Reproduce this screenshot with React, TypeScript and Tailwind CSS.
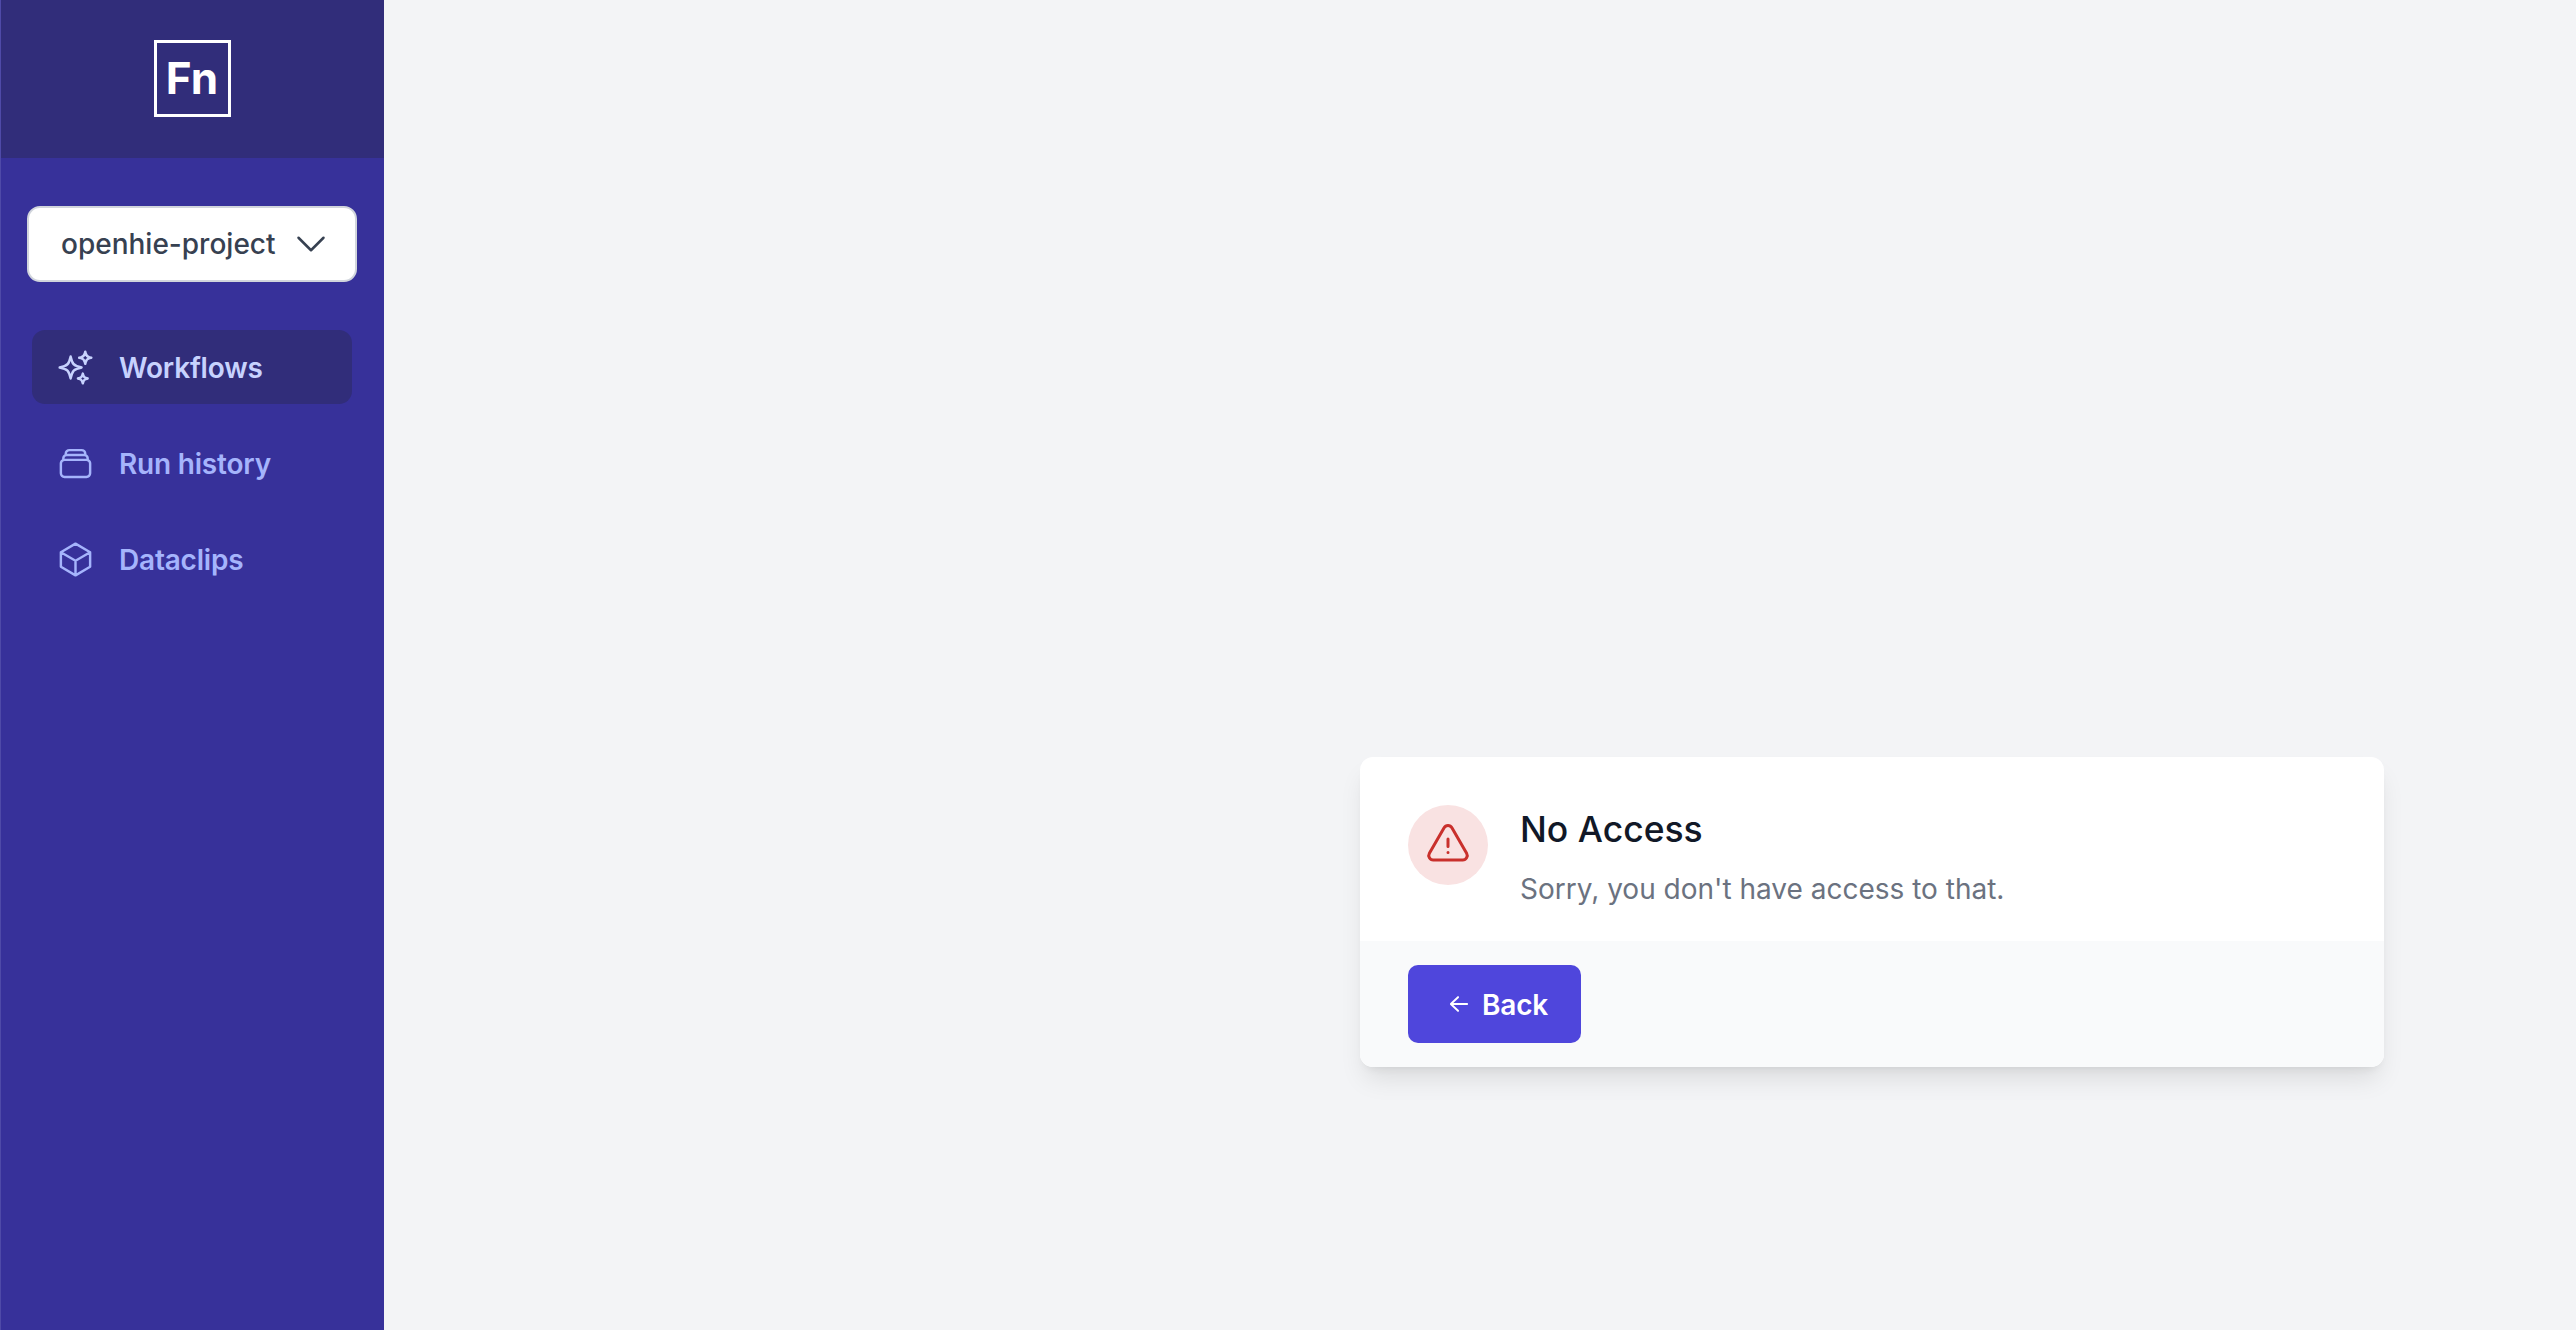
import {
  HiOutlineSparkles,
  HiOutlineRectangleStack,
  HiOutlineCube,
  HiOutlineChevronDown,
  HiOutlineExclamationTriangle,
  HiMiniArrowLeft,
} from "react-icons/hi2";

const font = { fontFamily: "Inter, sans-serif" };

export default function App() {
  return (
    <div className="flex h-[1330px] w-[2576px] overflow-hidden bg-[#f3f4f6]" style={font}>
      {/* Sidebar */}
      <aside className="flex w-[384px] shrink-0 flex-col border-l border-l-[#4f4aa8] bg-[#37319a]">
        <div className="flex h-[158px] items-center justify-center bg-[#312d7a] pr-[1px]">
          <div className="mb-[2px] flex h-[77px] w-[77px] items-center justify-center border-[3px] border-white text-[44px] font-bold text-white">
            Fn
          </div>
        </div>

        <div className="px-[26px] pt-[48px]">
          <button className="flex h-[76px] w-[330px] items-center justify-between rounded-[13px] border-2 border-gray-300 bg-white pl-[32px] pr-[24px] text-[28px] font-medium text-[#374151]">
            openhie-project
            <HiOutlineChevronDown className="h-[40px] w-[40px]" />
          </button>
        </div>

        <nav className="flex flex-col gap-[22px] pl-[31px] pr-[32px] pt-[48px]">
          <a className="flex h-[74px] items-center gap-[24px] rounded-[13px] bg-[#312d7a] px-[24px] text-[28px] font-semibold tracking-[-0.2px] text-[#c7d2fe]">
            <HiOutlineSparkles className="h-[39px] w-[39px]" />
            <span className="mt-[2px]">Workflows</span>
          </a>
          <a className="flex h-[74px] items-center gap-[24px] px-[24px] text-[28px] font-semibold tracking-[-0.2px] text-[#a5b4fc]">
            <HiOutlineRectangleStack className="h-[39px] w-[39px]" />
            <span className="mt-[2px]">Run history</span>
          </a>
          <a className="flex h-[74px] items-center gap-[24px] px-[24px] text-[28px] font-semibold tracking-[-0.2px] text-[#a5b4fc]">
            <HiOutlineCube className="h-[39px] w-[39px]" />
            <span className="mt-[2px]">Dataclips</span>
          </a>
        </nav>
      </aside>

      {/* Main */}
      <main className="flex flex-1 items-start justify-end pr-[192px] pt-[757px]">
        <div className="w-[1024px] overflow-hidden rounded-[13px] bg-white shadow-[0_16px_26px_-5px_rgba(0,0,0,0.1),0_6px_10px_-6px_rgba(0,0,0,0.1)]">
          <div className="flex h-[184px] gap-[32px] px-[48px] pt-[48px]">
            <div className="flex h-[80px] w-[80px] shrink-0 items-center justify-center rounded-full bg-[#f9e2e2]">
              <HiOutlineExclamationTriangle className="h-[48px] w-[48px] text-[#c9302c]" />
            </div>
            <div className="pt-[1px]">
              <h3 className="text-[35.5px] leading-[48px] font-medium text-[#111827]">No Access</h3>
              <p className="mt-[15px] text-[28px] leading-[40px] text-[#6b7280]">
                Sorry, you don't have access to that.
              </p>
            </div>
          </div>
          <div className="flex h-[126px] items-start bg-[#f9fafb] px-[48px] pt-[24px]">
            <button className="flex h-[78px] w-[173px] items-center gap-[10px] rounded-[10px] bg-[#4f46dc] pl-[38px] text-[28px] font-semibold tracking-[-0.2px] text-white">
              <HiMiniArrowLeft className="h-[26px] w-[26px]" />
              <span className="mt-[1px]">Back</span>
            </button>
          </div>
        </div>
      </main>
    </div>
  );
}
